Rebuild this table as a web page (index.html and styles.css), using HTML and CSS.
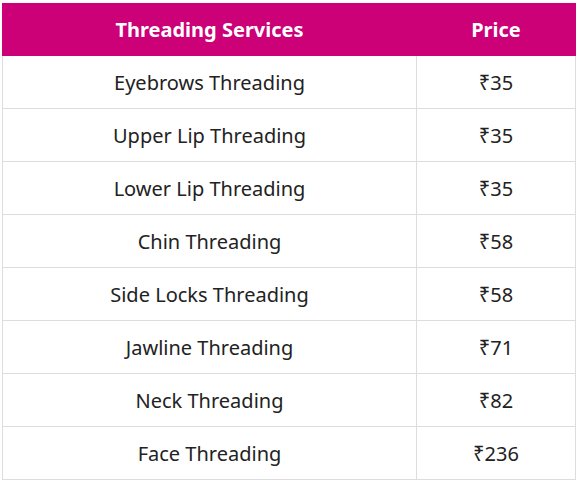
FILE: index.html
```html
<!DOCTYPE html>
<html>
<head>
<meta charset="utf-8">
<link rel="stylesheet" href="styles.css">
</head>
<body>
<table class="price-table">
  <thead>
    <tr><th class="svc">Threading Services</th><th class="price">Price</th></tr>
  </thead>
  <tbody>
    <tr><td>Eyebrows Threading</td><td>₹35</td></tr>
    <tr><td>Upper Lip Threading</td><td>₹35</td></tr>
    <tr><td>Lower Lip Threading</td><td>₹35</td></tr>
    <tr><td>Chin Threading</td><td>₹58</td></tr>
    <tr><td>Side Locks Threading</td><td>₹58</td></tr>
    <tr><td>Jawline Threading</td><td>₹71</td></tr>
    <tr><td>Neck Threading</td><td>₹82</td></tr>
    <tr><td>Face Threading</td><td>₹236</td></tr>
  </tbody>
</table>
</body>
</html>
```
FILE: styles.css
```css
html, body { margin: 0; padding: 0; background: #fff; }
body { padding: 3px 2px 0 2px; font-family: "Noto Sans", "Open Sans", sans-serif; }
.price-table {
  width: 574px;
  border-collapse: collapse;
  table-layout: fixed;
}
.price-table th {
  background: #cc0077;
  color: #fff;
  font-weight: 700;
  font-size: 20px;
  height: 51px;
  padding: 0;
  text-align: center;
  border: 1px solid #cc0077;
}
.price-table th.svc { width: 413px; }
.price-table td {
  height: 51px;
  padding: 1px 0 0 0;
  text-align: center;
  font-size: 20px;
  color: #222;
  border: 1px solid #dddddd;
}
```
